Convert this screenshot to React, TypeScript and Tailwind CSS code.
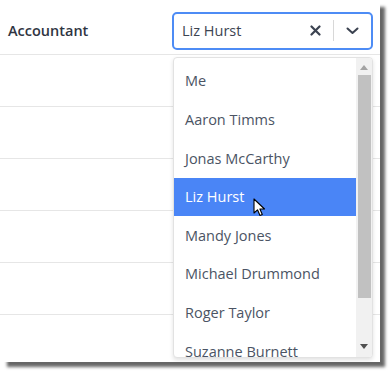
const PEOPLE = ['Me', 'Aaron Timms', 'Jonas McCarthy', 'Liz Hurst', 'Mandy Jones', 'Michael Drummond', 'Roger Taylor', 'Suzanne Burnett'];

function Cursor() {
  return (
    <svg width="13" height="19" viewBox="0 0 13 19" className="absolute left-[253px] top-[198px]">
      <path d="M1 1 L1 15 L4.5 11.8 L7 17.5 L9.3 16.5 L6.9 11 L11.5 11 Z" fill="#fff" stroke="#000" strokeWidth="1.1" strokeLinejoin="round" />
    </svg>
  );
}

export default function App() {
  const selected = 'Liz Hurst';
  return (
    <div className="w-[392px] h-[374px] bg-white" style={{ fontFamily: '"Open Sans", "Noto Sans", sans-serif' }}>
      <div className="relative w-[380px] h-[362px] bg-white overflow-hidden shadow-[6px_6px_3px_-1px_rgba(0,0,0,0.6)]">
        <div className="flex items-center h-[55px] border-b border-[#e6e6e6] pl-2 pr-[7px] pt-[7px]">
          <span className="text-[14.5px] font-semibold text-[#2f3542]">Accountant</span>
          <div className="ml-auto flex items-center w-[201px] h-[38px] border-2 border-[#4d8cf5] rounded-[5px] pl-[8px]">
            <span className="text-[14.5px] text-[#3d4452]">{selected}</span>
            <svg width="11" height="11" viewBox="0 0 11 11" className="ml-auto">
              <path d="M1.5 1.5 L9.5 9.5 M9.5 1.5 L1.5 9.5" stroke="#3b4250" strokeWidth="2.2" strokeLinecap="round" />
            </svg>
            <div className="w-px h-[21px] bg-[#d8d8d8] ml-[12px]" />
            <svg width="13" height="8" viewBox="0 0 13 8" className="ml-[12px] mr-[12px]">
              <path d="M1.5 1.5 L6.5 6 L11.5 1.5" fill="none" stroke="#3b4250" strokeWidth="2" strokeLinecap="round" strokeLinejoin="round" />
            </svg>
          </div>
        </div>
        {[0, 1, 2, 3, 4, 5].map((i) => (
          <div key={i} className="h-[52px] border-b border-[#e6e6e6]" />
        ))}

        <div className="absolute left-[173px] top-[57px] w-[200px] h-[301px] bg-white border border-[#e2e2e2] rounded-[4px] shadow-[0_2px_4px_rgba(0,0,0,0.12)] flex overflow-hidden">
          <div className="flex-1 pt-[4px]">
            {PEOPLE.map((p) => (
              <div
                key={p}
                className={`h-[38.6px] flex items-center pl-[11px] text-[14.5px] ${p === selected ? 'bg-[#4a85f6] text-white' : 'text-[#4b5464]'}`}
              >
                {p}
              </div>
            ))}
          </div>
          <div className="w-[16px] bg-[#f1f1f1] flex flex-col items-center">
            <svg width="8" height="5" viewBox="0 0 8 5" className="mt-[7px]">
              <path d="M0 5 L4 0 L8 5 Z" fill="#a3a3a3" />
            </svg>
            <div className="w-[13px] h-[223px] bg-[#c1c1c1] mt-[5px]" />
            <svg width="8" height="5" viewBox="0 0 8 5" className="mt-auto mb-[8px]">
              <path d="M0 0 L4 5 L8 0 Z" fill="#505050" />
            </svg>
          </div>
        </div>
        <Cursor />
      </div>
    </div>
  );
}
